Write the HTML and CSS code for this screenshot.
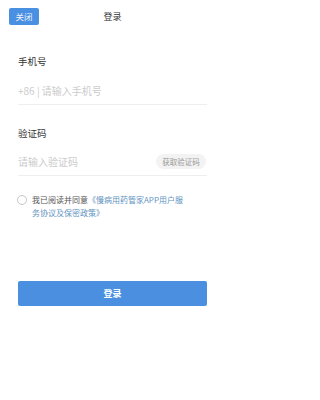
FILE: index.html
```html
<!DOCTYPE html>
<html lang="zh-CN">
<head>
<meta charset="utf-8">
<title>登录</title>
<link rel="stylesheet" href="styles.css">
</head>
<body>
<div class="page">
  <header class="header">
    <button class="close-btn">关闭</button>
    <div class="title">登录</div>
  </header>
  <main class="form">
    <div class="field">
      <div class="field-label">手机号</div>
      <div class="field-row">
        <span class="placeholder">+86 | 请输入手机号</span>
      </div>
    </div>
    <div class="field field-code">
      <div class="field-label">验证码</div>
      <div class="field-row">
        <span class="placeholder">请输入验证码</span>
        <span class="code-btn">获取验证码</span>
      </div>
    </div>
    <div class="agree">
      <span class="radio"></span>
      <p class="agree-text">我已阅读并同意<span class="link">《慢病用药管家APP用户服务协议及保密政策》</span></p>
    </div>
    <button class="login-btn">登录</button>
  </main>
</div>
</body>
</html>
```
FILE: styles.css
```css
* { box-sizing: border-box; }
html, body {
  margin: 0;
  padding: 0;
  background: #fff;
}
body {
  font-family: "Noto Sans CJK SC", "Noto Sans", sans-serif;
  color: #333;
}
.page {
  width: 225px;
  height: 400px;
}
.header {
  position: relative;
  height: 34px;
  padding: 8px 9px 0;
}
.close-btn {
  display: block;
  width: 30px;
  height: 17px;
  padding: 0;
  border: none;
  border-radius: 2px;
  background: #4a90e2;
  color: #eef4fc;
  font-family: inherit;
  font-size: 8.5px;
  line-height: 17px;
}
.title {
  position: absolute;
  left: 0;
  right: 0;
  top: 8px;
  text-align: center;
  font-size: 9px;
  line-height: 17px;
  color: #333;
}
.form {
  padding: 20px 18px 0;
}
.field-label {
  height: 14px;
  line-height: 14px;
  font-size: 9.5px;
  color: #333;
}
.field-row {
  display: flex;
  align-items: center;
  justify-content: space-between;
  height: 29px;
  margin-top: 8px;
  border-bottom: 1px solid #eeeeee;
}
.field-code {
  margin-top: 21px;
}
.field-code .field-row {
  margin-top: 7px;
}
.placeholder {
  font-size: 10px;
  color: #cbcbcb;
}
.code-btn {
  width: 50px;
  height: 15px;
  margin-right: 1px;
  border-radius: 7.5px;
  background: #f3f3f3;
  color: #999;
  font-size: 7.5px;
  line-height: 15px;
  text-align: center;
}
.agree {
  display: flex;
  align-items: flex-start;
  margin-top: 17px;
}
.radio {
  flex: none;
  width: 10px;
  height: 10px;
  margin-top: 1.5px;
  margin-left: -1px;
  border: 1px solid #c8c8c8;
  border-radius: 50%;
}
.agree-text {
  margin: 0 0 0 5px;
  width: 156px;
  font-size: 8px;
  line-height: 13px;
  color: #555;
}
.link {
  color: #5f93bf;
}
.login-btn {
  display: block;
  width: 189px;
  height: 25px;
  margin-top: 62px;
  padding: 0;
  border: none;
  border-radius: 2px;
  background: #4a8fe0;
  color: #fff;
  font-family: inherit;
  font-size: 9px;
  font-weight: bold;
}
```
